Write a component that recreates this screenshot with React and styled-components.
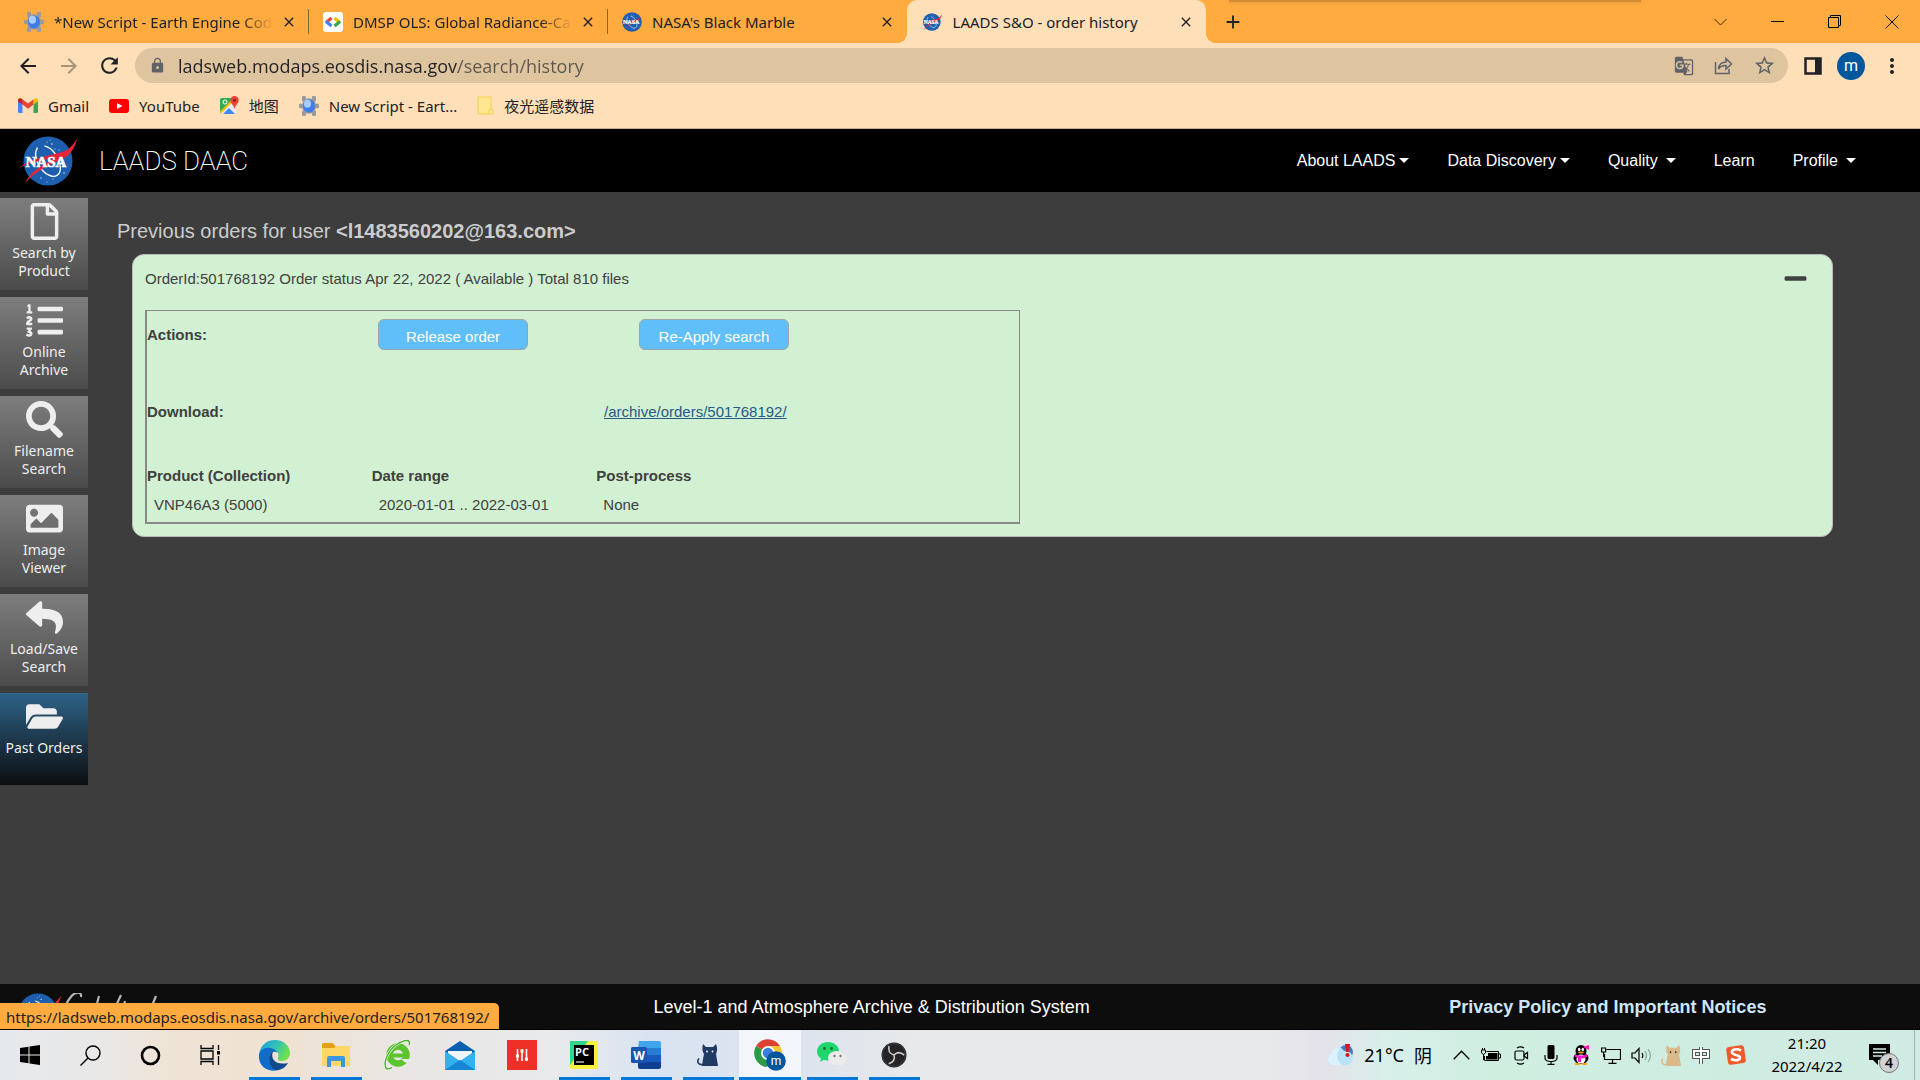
import { useState } from "react";
import styled, { createGlobalStyle } from "styled-components";
import {
  FaRegFile,
  FaListOl,
  FaSearch,
  FaImage,
  FaReply,
  FaFolderOpen,
  FaMinus,
} from "react-icons/fa";
import {
  MdArrowBack,
  MdArrowForward,
  MdRefresh,
  MdLock,
  MdGTranslate,
  MdStarBorder,
  MdMoreVert,
  MdAdd,
  MdClose,
} from "react-icons/md";

const GlobalStyle = createGlobalStyle`
  * {
    box-sizing: border-box;
  }
  body {
    margin: 0;
    background-color: #3d3d3d;
    font-family: "Liberation Sans", Arial, sans-serif;
  }
  button {
    border: none;
    padding: 0;
    background: none;
    font-family: inherit;
    color: inherit;
  }
  svg {
    display: block;
    flex-shrink: 0;
  }
`;

const uiFont = `"Noto Sans", "Noto Sans CJK SC", sans-serif`;

const Screen = styled.div`
  min-height: 100vh;
  display: flex;
  flex-direction: column;
`;

/* browser */

const TabStrip = styled.div`
  position: relative;
  display: flex;
  align-items: center;
  height: 43px;
  padding-left: 10px;
  background-color: #ffab40;
  color: #202124;
  font-family: ${uiFont};
`;
const StripShadow = styled.div`
  position: absolute;
  top: 0;
  left: 64%;
  width: 412px;
  height: 2px;
  background-color: #d18c34;
  box-shadow: 0 0 4px #d18c34;
`;
const Tab = styled.div`
  position: relative;
  display: flex;
  align-items: center;
  flex: 0 1 299px;
  min-width: 0;
  height: 43px;
  padding: 0 12px 0 14px;
  background-color: ${(props) => (props.$active ? "#ffdfb8" : "transparent")};
  border-radius: 10px 10px 0 0;
  &::before,
  &::after {
    content: "";
    display: ${(props) => (props.$active ? "block" : "none")};
    position: absolute;
    bottom: 0;
    width: 10px;
    height: 10px;
  }
  &::before {
    left: -10px;
    background: radial-gradient(circle at 0 0, transparent 10px, #ffdfb8 10px);
  }
  &::after {
    right: -10px;
    background: radial-gradient(circle at 100% 0, transparent 10px, #ffdfb8 10px);
  }
`;
const TabDivider = styled.div`
  position: absolute;
  right: 0;
  width: 1px;
  height: 25px;
  background-color: #8f6428;
`;
const TabTitle = styled.button`
  flex: 1;
  min-width: 0;
  margin-left: 10px;
  font-size: 15px;
  line-height: 22px;
  text-align: left;
  white-space: nowrap;
  overflow: hidden;
  mask-image: ${(props) =>
    props.$fade
      ? "linear-gradient(to right, #000 calc(100% - 32px), transparent)"
      : "none"};
`;
const TabClose = styled.button`
  display: flex;
  justify-content: center;
  width: 16px;
  margin-left: 8px;
`;
const NewTab = styled.button`
  display: flex;
  margin-left: 16px;
`;
const WindowButtons = styled.div`
  display: flex;
  margin-left: auto;
`;
const WindowButton = styled.button`
  display: flex;
  align-items: center;
  justify-content: center;
  width: 57px;
  height: 37px;
  color: #000;
`;

const Toolbar = styled.div`
  display: flex;
  align-items: center;
  height: 45px;
  padding: 0 16px 0 15px;
  background-color: #ffdfb8;
  color: #202124;
`;
const ToolButton = styled.button`
  display: flex;
  justify-content: center;
  width: 25px;
  margin-right: 16px;
  color: ${(props) => (props.$dim ? "#a89478" : "#202124")};
`;
const AddressBar = styled.label`
  display: flex;
  align-items: center;
  flex: 1;
  height: 35px;
  margin: 0 16px 0 -3px;
  padding: 0 12px 0 14px;
  border-radius: 18px;
  background-color: #dfc4a0;
  color: #5f6368;
`;
const AddressInput = styled.input`
  flex: 1;
  min-width: 0;
  margin-left: 12px;
  padding: 0;
  border: none;
  outline: none;
  font-family: "Open Sans", sans-serif;
  font-size: 18px;
  line-height: 26px;
  color: #202124;
  background: linear-gradient(to right, #202124 280px, #5d564d 280px);
  background-clip: text;
  -webkit-text-fill-color: transparent;
`;
const AddressActions = styled.div`
  display: flex;
  align-items: center;
  gap: 20px;
`;
const ToolbarEnd = styled.div`
  display: flex;
  align-items: center;
  gap: 15px;
`;
const Avatar = styled.button`
  width: 28px;
  height: 28px;
  border-radius: 50%;
  background-color: #01579b;
  color: #fff;
  font-family: Roboto, sans-serif;
  font-size: 16px;
  line-height: 26px;
`;
const Bookmarks = styled.nav`
  display: flex;
  align-items: center;
  height: 41px;
  padding: 0 18px 5px;
  gap: 20px;
  background-color: #ffdfb8;
  border-bottom: 1px solid #c9b091;
`;
const Bookmark = styled.a`
  display: flex;
  align-items: center;
  gap: 10px;
  color: #202124;
  font-family: ${uiFont};
  font-size: 15px;
  line-height: 22px;
  text-decoration: none;
`;

/* site */

const Header = styled.header`
  display: flex;
  align-items: center;
  height: 63px;
  padding: 0 64px 0 18px;
  background-color: #000;
  color: #fff;
`;
const Brand = styled.a`
  display: flex;
  align-items: center;
  gap: 21px;
  color: #fff;
  font-family: Roboto, sans-serif;
  font-size: 26px;
  font-weight: 200;
  line-height: 32px;
  text-decoration: none;
`;
const Menu = styled.nav`
  display: flex;
  gap: 38px;
  margin-left: auto;
`;
const MenuItem = styled.a`
  display: flex;
  align-items: center;
  gap: ${(props) => (props.$wide ? "8px" : "4px")};
  color: #fff;
  font-size: 16px;
  line-height: 22px;
  text-decoration: none;
`;
const Caret = styled.span`
  border: 5px solid transparent;
  border-top-color: #fff;
  border-bottom-width: 0;
`;

const Page = styled.div`
  display: flex;
  flex: 1;
  padding-top: 6px;
  background-color: #3d3d3d;
`;
const Sidebar = styled.nav`
  display: flex;
  flex-direction: column;
  gap: 7px;
  width: 88px;
`;
const SidebarItem = styled.a`
  display: flex;
  flex-direction: column;
  align-items: center;
  gap: 4px;
  height: 92px;
  padding-top: 5px;
  background: ${(props) =>
    props.$active
      ? "linear-gradient(#2e6288, #0d0e10)"
      : "linear-gradient(#7e7e7e, #4b4b4b)"};
  color: #eee;
  font-family: "Noto Sans", sans-serif;
  font-size: 14px;
  line-height: 18px;
  text-align: center;
  text-decoration: none;
`;
const Content = styled.main`
  flex: 1;
  padding: 20px 87px 0 29px;
`;
const Title = styled.h1`
  margin: 0;
  color: #ccc;
  font-size: 20px;
  font-weight: normal;
  line-height: 26px;
`;
const Order = styled.section`
  margin: 10px 0 0 15px;
  padding: 11px 12px 12px;
  border: 1px solid #b9bab9;
  border-radius: 12px;
  background-color: #d2f1d2;
  color: #404040;
  font-size: 15px;
  line-height: 24px;
`;
const OrderHead = styled.div`
  display: flex;
  align-items: center;
  justify-content: space-between;
  padding-right: 12px;
`;
const OrderDetails = styled.div`
  max-width: 875px;
  margin-top: 19px;
  border: 1px solid #888;
  border-left-width: 2px;
  border-bottom-width: 2px;
`;
const OrderRow = styled.div`
  display: flex;
  align-items: center;
`;
const ActionsRow = styled(OrderRow)`
  gap: 111px;
  padding-top: 8px;
`;
const DownloadRow = styled(OrderRow)`
  padding: 50px 0 40px;
`;
const Label = styled.strong`
  width: ${(props) => (props.$span ? "457px" : "120px")};
`;
const ActionButton = styled.button`
  width: 150px;
  height: 31px;
  padding-top: 4px;
  border: 1px solid #a0a4a8;
  border-radius: 6px;
  background-color: #60bff8;
  color: #fff;
  font-size: 15px;
`;
const ArchiveLink = styled.a`
  color: #265a88;
`;
const ProductTable = styled.table`
  width: 674px;
  margin-bottom: 5px;
  border-collapse: collapse;
  table-layout: fixed;
  text-align: left;
  th {
    padding: 0 0 5px;
  }
  td {
    padding: 0 0 0 7px;
  }
`;

const Footer = styled.footer`
  position: relative;
  display: flex;
  align-items: center;
  height: 46px;
  padding-right: 8%;
  background-color: #0d0d0d;
  border-bottom: 1px solid #000;
  overflow: hidden;
`;
const FooterLogo = styled.div`
  display: flex;
  align-items: flex-start;
  flex-shrink: 0;
  width: 37%;
  height: 46px;
  padding: 9px 0 0 14px;
`;
const FooterText = styled.span`
  color: #fff;
  font-size: 18px;
  line-height: 24px;
`;
const FooterLink = styled.a`
  margin-left: auto;
  color: #cde6fb;
  font-size: 18px;
  font-weight: bold;
  line-height: 24px;
  text-decoration: none;
`;
const StatusBubble = styled.div`
  position: absolute;
  left: 0;
  bottom: -1px;
  height: 27px;
  padding: 0 10px 0 6px;
  border-top-right-radius: 5px;
  background-color: #ffab40;
  color: #202124;
  font-family: ${uiFont};
  font-size: 15px;
  line-height: 28px;
`;

/* taskbar */

const Taskbar = styled.div`
  display: flex;
  height: 50px;
  background: linear-gradient(
    to right,
    #e6e9ec 0,
    #e9e8e8 5%,
    #efe3d5 9%,
    #efe2d3 15%,
    #e9e6e4 21%,
    #e8eaec 29%,
    #d9e3f1 34%,
    #dde4ee 42%,
    #e8e9ea 48%,
    #e7e9ea 66%,
    #e4e2ea 69%,
    #d8efea 72%,
    #cfeee0 78%,
    #d0ebe3 100%
  );
  color: #000;
  font-family: ${uiFont};
`;
const SystemButton = styled.button`
  display: flex;
  align-items: center;
  justify-content: center;
  width: 60px;
`;
const Apps = styled.div`
  display: flex;
  margin-left: 3px;
`;
const AppButton = styled.button`
  position: relative;
  display: flex;
  align-items: center;
  justify-content: center;
  width: 62px;
  background-color: ${(props) =>
    props.$active ? "rgba(255, 255, 255, 0.65)" : "transparent"};
  &::after {
    content: "";
    display: ${(props) => (props.$open ? "block" : "none")};
    position: absolute;
    bottom: 0;
    left: ${(props) => (props.$active ? "0" : "6px")};
    right: ${(props) => (props.$active ? "0" : "5px")};
    height: 3px;
    background-color: #0078d7;
  }
`;
const Tray = styled.div`
  display: flex;
  align-items: center;
  margin-left: auto;
`;
const Weather = styled.button`
  display: flex;
  align-items: center;
  gap: 10px;
  margin-right: 14px;
  font-size: 18px;
`;
const TrayButton = styled.button`
  display: flex;
  justify-content: center;
  width: ${(props) => (props.$wide ? "40px" : "30px")};
`;
const Clock = styled.button`
  width: 94px;
  padding-left: 8px;
  font-size: 15px;
  line-height: 23px;
`;
const Notices = styled.button`
  position: relative;
  display: flex;
  justify-content: center;
  width: 58px;
`;
const NoticeCount = styled.span`
  position: absolute;
  top: 9px;
  right: 9px;
  width: 20px;
  height: 20px;
  border: 1px solid #777;
  border-radius: 50%;
  background-color: #cfd3d2;
  font-size: 14px;
  font-weight: 600;
  line-height: 18px;
`;
const ShowDesktop = styled.button`
  width: 6px;
  height: 50px;
  margin-left: 6px;
  border-left: 1px solid #9fb3ad;
`;

const NasaLogo = ({ size, tail, plain }) => (
  <svg width={size * (tail ? 1.2 : 1)} height={size} viewBox={tail ? "-5 0 60 50" : "0 0 50 50"}>
    <circle cx="25" cy="25" r="24.5" fill="#1d5fae" />
    <g fill="#dfe9f7">
      <circle cx="14" cy="12" r=".7" />
      <circle cx="24" cy="6" r=".6" />
      <circle cx="29" cy="8" r=".8" />
      <circle cx="32" cy="13" r=".5" />
      <circle cx="27" cy="4" r=".5" />
      <circle cx="10" cy="38" r=".6" />
      <circle cx="18" cy="42" r=".7" />
      <circle cx="30" cy="43" r=".6" />
      <circle cx="36" cy="14" r=".6" />
      <circle cx="41" cy="37" r=".7" />
      <circle cx="24" cy="46" r=".5" />
    </g>
    <ellipse cx="25" cy="25" rx="10" ry="17" fill="none" stroke="#fff" strokeWidth="1.3" transform="rotate(-32 25 25)" strokeDasharray="62 8" />
    <path
      d={tail
        ? "M-4 32 C8 22 30 19 42 15 C48 12 51 7 54 3 C52 12 47 19 40 23 C28 28 14 34 2 47 C8 35 20 28 32 22 C18 24 6 27 -4 32Z"
        : "M3 33 C14 24 30 21 42 17 L46 13 C44 18 42 21 38 23 C28 27 16 33 8 43 C13 34 21 28 31 23 C20 25 10 28 3 33Z"}
      fill="#e4253a"
    />
    {!plain && (
      <text x="23" y="31" textAnchor="middle" fill="#fff" stroke="#fff" strokeWidth=".6" fontFamily="Liberation Serif, serif" fontWeight="bold" fontSize="15">
        NASA
      </text>
    )}
  </svg>
);

const EngineIcon = () => (
  <svg width="20" height="22" viewBox="0 0 20 20" preserveAspectRatio="none">
    <g fill="#9a9a9c">
      <circle cx="10" cy="10" r="7" />
      <rect x="3" y="1" width="4" height="5" rx="1" />
      <rect x="13" y="1" width="4" height="5" rx="1" />
      <rect x="3" y="14" width="4" height="5" rx="1" />
      <rect x="13" y="14" width="4" height="5" rx="1" />
      <rect x="0" y="8" width="4" height="4" rx="1" />
      <rect x="16" y="8" width="4" height="4" rx="1" />
    </g>
    <circle cx="10" cy="10" r="6" fill="#3f7de8" />
    <circle cx="8.5" cy="8" r="3.6" fill="#a9ccfb" />
  </svg>
);

const CodeIcon = () => (
  <svg width="20" height="20" viewBox="0 0 20 20">
    <rect width="20" height="20" rx="3" fill="#fff" />
    <g fill="none" strokeWidth="3.2">
      <path d="M8.500 6 L3 10.500" stroke="#ea4335" />
      <path d="M3 9.500 L8.500 14" stroke="#4285f4" />
      <path d="M11.500 6 L17 10.500" stroke="#fbbc04" />
      <path d="M17 9.500 L11.500 14" stroke="#34a853" />
    </g>
  </svg>
);

const GmailIcon = () => (
  <svg width="20" height="16" viewBox="0 0 20 16">
    <path d="M0 2h4.500v13H1.500A1.500 1.500 0 0 1 0 13.500z" fill="#4285f4" />
    <path d="M15.500 2H20v11.500a1.500 1.500 0 0 1-1.500 1.500h-3z" fill="#34a853" />
    <path d="M4.500 6.500V1.200L10 5.400l5.500-4.200v5.300L10 10.700z" fill="#ea4335" />
    <path d="M0 2.200C0 0 2.500-.4 4.500 1.200v5.300L0 3.500z" fill="#c5221f" />
    <path d="M20 2.200C20 0 17.500-.4 15.500 1.200v5.300L20 3.500z" fill="#fbbc04" />
  </svg>
);

const YoutubeIcon = () => (
  <svg width="20" height="14" viewBox="0 0 20 14">
    <rect width="20" height="14" rx="3" fill="#f00" />
    <path d="M8 4l5.500 3L8 10z" fill="#fff" />
  </svg>
);

const MapsIcon = () => (
  <svg width="19" height="19" viewBox="0 0 19 19">
    <rect y="2" width="16" height="16" rx="2" fill="#34a853" />
    <path d="M0 17L13 4l3 1v12a2 2 0 0 1-1 1H1z" fill="#e8eaed" />
    <path d="M3 18l6-6 6 6z" fill="#4285f4" />
    <path d="M0 17L14 3" stroke="#fbbc04" strokeWidth="2" />
    <path d="M14.500 0a4.200 4.200 0 0 1 4.200 4.200c0 3-3.500 4.500-4.200 9-.7-4.500-4.200-6-4.200-9A4.200 4.200 0 0 1 14.500 0z" fill="#ea4335" />
    <circle cx="14.500" cy="4.200" r="1.500" fill="#8c1d18" />
    <circle cx="5" cy="6" r="2" fill="none" stroke="#fff" />
  </svg>
);

const NoteIcon = () => (
  <svg width="17" height="19" viewBox="0 0 17 19">
    <path d="M1 1h13v12l2 1v4H1z" fill="#ffe68f" stroke="#f3cf56" />
    <path d="M12 18v-4l2-1" fill="none" stroke="#f3cf56" />
  </svg>
);

const ShareIcon = () => (
  <svg width="19" height="19" viewBox="0 0 19 19" fill="none" stroke="#5f6368" strokeWidth="1.500">
    <path d="M1.500 6v11.500H15V13" />
    <path d="M4.500 13C5 8.500 7.500 6 12 6V2.500l5.500 5.500L12 13V9.500C8.500 9.500 6 10.500 4.500 13z" />
  </svg>
);

const PanelIcon = () => (
  <svg width="18" height="18" viewBox="0 0 18 18">
    <path d="M1.500 1.500h15v15h-15z" fill="none" stroke="#202124" strokeWidth="2.500" />
    <path d="M11 1h6v16h-6z" fill="#202124" />
  </svg>
);

const ChevronIcon = () => (
  <svg width="13" height="8" viewBox="0 0 13 8">
    <path d="M.5 1l6 6 6-6" fill="none" stroke="#3a2a10" />
  </svg>
);
const MinimizeIcon = () => (
  <svg width="13" height="2" viewBox="0 0 13 2">
    <path d="M0 .5h13" stroke="#000" />
  </svg>
);
const RestoreIcon = () => (
  <svg width="13" height="13" viewBox="0 0 13 13">
    <path d="M.5 2.500h10v10H.5zM2.500 2.500v-2h10v10h-2" fill="none" stroke="#000" />
  </svg>
);
const CloseIcon = () => (
  <svg width="14" height="14" viewBox="0 0 14 14">
    <path d="M.5 .5l13 13M13.500 .5l-13 13" fill="none" stroke="#000" />
  </svg>
);

const WindowsIcon = () => (
  <svg width="20" height="20" viewBox="0 0 20 20">
    <path d="M0 3l8.500-1.200v7.700H0zM9.500 1.600L20 0v9.500H9.500zM0 10.500h8.500v7.700L0 17zM9.500 10.500H20V20L9.500 18.400z" />
  </svg>
);
const SearchIcon = () => (
  <svg width="21" height="21" viewBox="0 0 21 21" fill="none" stroke="#000" strokeWidth="1.400">
    <circle cx="13" cy="8" r="7" />
    <path d="M8 13l-7.500 7.500" />
  </svg>
);
const CortanaIcon = () => (
  <svg width="21" height="21" viewBox="0 0 21 21">
    <circle cx="10.500" cy="10.500" r="8.500" fill="none" stroke="#000" strokeWidth="2.600" />
  </svg>
);
const TaskViewIcon = () => (
  <svg width="21" height="20" viewBox="0 0 21 20" fill="none" stroke="#000" strokeWidth="1.300">
    <path d="M1 0v3.500h12V0M1 20v-3.500h12V20M1 6h12v8H1zM18.500 0v5M18.500 11v9" />
    <path d="M17 6h3v3.500h-3z" fill="#000" stroke="none" />
  </svg>
);
const EdgeIcon = () => (
  <svg width="31" height="31" viewBox="0 0 31 31">
    <defs>
      <linearGradient id="edgeTop" x1="0" x2="1" y2=".4">
        <stop offset="0" stopColor="#1e9be6" />
        <stop offset=".6" stopColor="#33c3b5" />
        <stop offset="1" stopColor="#6fe04e" />
      </linearGradient>
    </defs>
    <path d="M0 15C1 6 7 0 16 0c9 0 15 6 15 13 0 5-4 8-8 8-3 0-5-1-4-3 2-4-1-8-6-8-6 0-11 2-13 5z" fill="url(#edgeTop)" />
    <path d="M0 15c1-5 6-8 11-7 3 .5 6 2 7.500 4.500C13 10 10 14 10 18c0 6 5 10 11 10l2 .500C13 34-1 29 0 15z" fill="#0f6cc9" />
    <path d="M10 18c0-3 2-6 4-6.500-3 8 3 14 15 11.500-3 5-7 7-12 7-5-2-7-7-7-12z" fill="#124a91" />
  </svg>
);
const ExplorerIcon = () => (
  <svg width="28" height="25" viewBox="0 0 28 25">
    <path d="M0 1.500A1.500 1.500 0 0 1 1.500 0h9l3 3H28v5H0z" fill="#e2a10e" />
    <path d="M0 5h12l2-2h14v20H0z" fill="#ffd766" />
    <path d="M5 24v-9a2 2 0 0 1 2-2h14a2 2 0 0 1 2 2v9h-4v-6H9v6z" fill="#3d96e0" />
  </svg>
);
const GreenBrowserIcon = () => (
  <svg width="28" height="32" viewBox="0 0 28 32" fill="none">
    <circle cx="14" cy="16" r="8.500" stroke="#5cc52e" strokeWidth="6.500" />
    <path d="M7 16.500h14" stroke="#5cc52e" strokeWidth="4" />
    <path d="M17 20h11v3.500h-7z" fill="#e9eaeb" />
    <path d="M25 6C27 0 21 0 12 6 4 12-1 23 2 29c1 1.500 4 1 6-.5" stroke="#fff" strokeWidth="2.600" />
    <path d="M25 6C27 0 21 0 12 6 4 12-1 23 2 29c1 1.500 4 1 6-.5" stroke="#46ad28" strokeWidth="1.400" />
  </svg>
);
const MailIcon = () => (
  <svg width="30" height="29" viewBox="0 0 30 29">
    <path d="M0 10L15 0l15 10v6H0z" fill="#0a5fb0" />
    <path d="M3 10h24v10H3z" fill="#f2f5f8" />
    <path d="M0 10l15 10L30 10v19H0z" fill="#34b1ed" />
    <path d="M0 29l15-10 15 10z" fill="#1586d4" />
  </svg>
);
const MixerIcon = () => (
  <svg width="30" height="30" viewBox="0 0 30 30">
    <path d="M0 0h30v30H0z" fill="#ef3026" />
    <path d="M10.500 9v12M15 9v12M19.500 9v12" stroke="#fff" strokeWidth="1.600" />
    <path d="M9 14.500h3v3H9zM13.500 9.500h3v3h-3zM18 17.500h3v3h-3z" fill="#fff" />
  </svg>
);
const PycharmIcon = () => (
  <svg width="28" height="28" viewBox="0 0 28 28">
    <path d="M0 0h28v28H0z" fill="#f7f23c" />
    <path d="M0 0h18L0 24z" fill="#2fd88a" />
    <path d="M4 4h20v20H4z" />
    <text x="5" y="14.500" fill="#fff" fontSize="11" fontWeight="bold" fontFamily="Open Sans, sans-serif">PC</text>
    <path d="M6 21h8" stroke="#bbb" strokeWidth="1.500" />
  </svg>
);
const WordIcon = () => (
  <svg width="30" height="28" viewBox="0 0 30 28">
    <path d="M8 0h20a2 2 0 0 1 2 2v5H7z" fill="#41a5ee" />
    <path d="M7 7h23v7H7z" fill="#2b7cd3" />
    <path d="M7 14h23v7H7z" fill="#185abd" />
    <path d="M7 21h23v5a2 2 0 0 1-2 2H9a2 2 0 0 1-2-2z" fill="#103f91" />
    <rect y="6" width="16" height="16" rx="1.500" fill="#1854b4" />
    <text x="8" y="18.500" textAnchor="middle" fill="#fff" fontSize="12" fontWeight="bold" fontFamily="Open Sans, sans-serif">W</text>
  </svg>
);
const CatIcon = ({ color, eyes, size }) => (
  <svg width={size} height={size} viewBox="0 0 22 22">
    <path d="M6 0l3 3h7l3-3c1.500 4 1.500 7 0 10l2 12H5l1-7 1-5C5 7 5 4 6 0z" fill={color} />
    <path d="M7 20.500c-6 1-7.500-3-5-6" fill="none" stroke={color} strokeWidth="1.600" />
    <circle cx="10" cy="7.500" r=".9" fill={eyes} />
    <circle cx="15.500" cy="7.500" r=".9" fill={eyes} />
  </svg>
);
const ChromeIcon = () => (
  <svg width="32" height="32" viewBox="0 0 32 32">
    <path d="M14 14L2 7A14 14 0 0 1 26 7z" fill="#dd4132" />
    <path d="M14 14L2 7a14 14 0 0 0 11 21l7-11z" fill="#2c9a47" />
    <path d="M14 7h12a14 14 0 0 1-13 21l7-11z" fill="#fcc62f" />
    <circle cx="14" cy="14" r="7" fill="#fff" />
    <circle cx="14" cy="14" r="5.300" fill="#3f7de0" />
    <circle cx="22" cy="22" r="9.800" fill="#01579b" />
    <text x="22" y="26" textAnchor="middle" fill="#fff" fontSize="12" fontFamily="Roboto, sans-serif">m</text>
  </svg>
);
const WechatIcon = () => (
  <svg width="30" height="26" viewBox="0 0 30 26">
    <path d="M11 0c6 0 11 4 11 9s-5 9.500-11 9.500c-1.500 0-3-.3-4-.7L3 20l1-3.500C1.500 15 0 12 0 9.500 0 4 5 0 11 0z" fill="#1ed66c" />
    <circle cx="7.500" cy="6.500" r="1.400" fill="#156b3b" />
    <circle cx="14.500" cy="6.500" r="1.400" fill="#156b3b" />
    <path d="M20 9c5 0 9 3 9 7 0 2.500-1.300 4.500-3.500 6l.5 3-3-2c-6 1-12-2-12-7 0-4 4-7 9-7z" fill="#ebebeb" />
    <circle cx="17.500" cy="14" r="1.200" fill="#777" />
    <circle cx="23.500" cy="14" r="1.200" fill="#777" />
  </svg>
);
const ObsIcon = () => (
  <svg width="26" height="26" viewBox="0 0 26 26">
    <circle cx="13" cy="13" r="12.500" fill="#252326" />
    <g fill="none" stroke="#d2d0d3" strokeWidth="1.500">
      <path d="M8 4c-1 5 1 8 5 9" />
      <path d="M8 4c-1 5 1 8 5 9" transform="rotate(120 13 13)" />
      <path d="M8 4c-1 5 1 8 5 9" transform="rotate(240 13 13)" />
    </g>
    <circle cx="13" cy="13" r="11.500" fill="none" stroke="#3c3a3e" />
  </svg>
);

const CloudIcon = () => (
  <svg width="28" height="22" viewBox="0 0 28 22">
    <circle cx="20" cy="8" r="7" fill="#3f7fc9" />
    <path d="M6 21a6 6 0 0 1-1-11 7 7 0 0 1 13-3 7 7 0 0 1 3 14z" fill="#b9e1f8" />
    <path d="M6 21a6 6 0 0 1-1-11 7 7 0 0 1 9-6c-3 6-5 11 2 17z" fill="#dcf1fc" />
    <path d="M19 0h5l-1 8h-3z" fill="#d9142b" />
    <circle cx="21.500" cy="11" r="2" fill="#d9142b" />
  </svg>
);
const UpIcon = () => (
  <svg width="17" height="10" viewBox="0 0 17 10">
    <path d="M.7 9.300l7.800-8 7.800 8" fill="none" stroke="#000" strokeWidth="1.300" />
  </svg>
);
const BatteryIcon = () => (
  <svg width="20" height="14" viewBox="0 0 20 14">
    <path d="M5.500 3.500h12v9H3.500V8M18 6h1.500v4H18" fill="none" stroke="#000" />
    <path d="M7 5h9.500v6.500H5V8h2z" />
    <path d="M.5 2h4v3l-2 1.500L.5 5zM1.500 0v2M3.500 0v2M2.500 6v6" stroke="#000" fill="none" />
  </svg>
);
const CameraIcon = () => (
  <svg width="15" height="19" viewBox="0 0 15 19" fill="none" stroke="#000" strokeWidth="1.200">
    <rect x="1" y="5" width="9" height="9" rx="1.500" />
    <path d="M10 9l3.500-2.500v6L10 10zM3 2c2-1.300 5-1.300 7 0M3 17c2 1.300 5 1.300 7 0" />
  </svg>
);
const MicIcon = () => (
  <svg width="14" height="20" viewBox="0 0 14 20">
    <rect x="3.500" width="7" height="14" rx="1.500" />
    <path d="M1 10v3c0 2 2 3.500 6 3.500s6-1.500 6-3.500v-3M7 16v3M3.500 19.300h7" fill="none" stroke="#000" strokeWidth="1.200" />
  </svg>
);
const PenguinIcon = () => (
  <svg width="17" height="20" viewBox="0 0 17 20">
    <ellipse cx="8" cy="6" rx="5.500" ry="6" />
    <ellipse cx="8" cy="13" rx="7.500" ry="6" />
    <ellipse cx="8" cy="14" rx="4.500" ry="4.500" fill="#fff" />
    <ellipse cx="6.200" cy="4.500" rx="1.300" ry="1.800" fill="#fff" />
    <ellipse cx="9.800" cy="4.500" rx="1.300" ry="1.800" fill="#fff" />
    <ellipse cx="8" cy="7.500" rx="3" ry="1" fill="#f5a300" />
    <path d="M2 9c4 2 8 2 12 0v3c-2 1-4 1.500-6 1.500V17H5v-4L2 12zM10 2l6-2v5z" fill="#f51bbd" />
    <ellipse cx="4.500" cy="19" rx="3" ry="1" fill="#f5a300" />
    <ellipse cx="11.500" cy="19" rx="3" ry="1" fill="#f5a300" />
  </svg>
);
const NetworkIcon = () => (
  <svg width="20" height="17" viewBox="0 0 20 17" fill="none" stroke="#000" strokeWidth="1.200">
    <path d="M5.500 2.500h14v10H3.500V7M11.500 12.500v3.500M7.500 16.300h8M.6 1h4v4h-4zM2.600 5v5" />
  </svg>
);
const VolumeIcon = () => (
  <svg width="21" height="17" viewBox="0 0 21 17" fill="none" stroke="#000" strokeWidth="1.200">
    <path d="M1 6h3l4-4.500v14L4 11H1zM11 6c1 1.500 1 3.500 0 5" />
    <path d="M14 4c2 3 2 6 0 9M17 2c3 4 3 9 0 13" stroke="#8da39d" />
  </svg>
);
const ImeIcon = () => (
  <svg width="18" height="19" viewBox="0 0 18 19" fill="none">
    <path d="M2 5h14v6H2zM9 1v17" stroke="#555" strokeWidth="4" />
    <path d="M2 5h14v6H2zM9 1v17" stroke="#fff" strokeWidth="2" />
  </svg>
);
const SogouIcon = () => (
  <svg width="20" height="20" viewBox="0 0 20 20">
    <rect x="1" y="1" width="18" height="18" rx="3" fill="#ee5a29" transform="rotate(-8 10 10)" />
    <path d="M15 5.500C11 3.500 5.500 4 6 7.500c.5 3 8 2 8 5 0 3-5 3.500-9 1.500" fill="none" stroke="#fff" strokeWidth="2.600" />
  </svg>
);
const NoticeIcon = () => (
  <svg width="21" height="22" viewBox="0 0 21 22">
    <path d="M0 0h21v16H9v5l-5-5H0z" />
    <path d="M4 5h13M4 8.500h13M4 12h9" stroke="#d0ebe3" strokeWidth="1.300" />
  </svg>
);

const tabs = [
  { title: "*New Script - Earth Engine Code Editor", icon: <EngineIcon />, fade: true, divider: true },
  { title: "DMSP OLS: Global Radiance-Calibrated", icon: <CodeIcon />, fade: true, divider: true },
  { title: "NASA's Black Marble", icon: <NasaLogo size={20} /> },
  { title: "LAADS S&O - order history", icon: <NasaLogo size={18} tail />, active: true },
];

const bookmarks = [
  { name: "Gmail", icon: <GmailIcon /> },
  { name: "YouTube", icon: <YoutubeIcon /> },
  { name: "地图", icon: <MapsIcon /> },
  { name: "New Script - Eart...", icon: <EngineIcon /> },
  { name: "夜光遥感数据", icon: <NoteIcon /> },
];

const menu = [
  { name: "About LAADS", caret: true },
  { name: "Data Discovery", caret: true },
  { name: "Quality", caret: true, wide: true },
  { name: "Learn" },
  { name: "Profile", caret: true, wide: true },
];

const sidebar = [
  { lines: ["Search by", "Product"], Icon: FaRegFile },
  { lines: ["Online", "Archive"], Icon: FaListOl },
  { lines: ["Filename", "Search"], Icon: FaSearch },
  { lines: ["Image", "Viewer"], Icon: FaImage },
  { lines: ["Load/Save", "Search"], Icon: FaReply },
  { lines: ["Past Orders"], Icon: FaFolderOpen, active: true },
];

const system = [
  { name: "Start", icon: <WindowsIcon /> },
  { name: "Search", icon: <SearchIcon /> },
  { name: "Cortana", icon: <CortanaIcon /> },
  { name: "Task view", icon: <TaskViewIcon /> },
];

const apps = [
  { name: "Edge", icon: <EdgeIcon />, open: true },
  { name: "Explorer", icon: <ExplorerIcon />, open: true },
  { name: "Browser", icon: <GreenBrowserIcon /> },
  { name: "Mail", icon: <MailIcon /> },
  { name: "Mixer", icon: <MixerIcon /> },
  { name: "PyCharm", icon: <PycharmIcon />, open: true },
  { name: "Word", icon: <WordIcon />, open: true },
  { name: "Clash", icon: <CatIcon color="#1f3a63" eyes="#fff" size={22} />, open: true },
  { name: "Chrome", icon: <ChromeIcon />, open: true, active: true },
  { name: "WeChat", icon: <WechatIcon />, open: true },
  { name: "OBS", icon: <ObsIcon />, open: true },
];

const tray = [
  { name: "Show hidden icons", icon: <UpIcon /> },
  { name: "Battery", icon: <BatteryIcon /> },
  { name: "Camera", icon: <CameraIcon /> },
  { name: "Microphone", icon: <MicIcon /> },
  { name: "QQ", icon: <PenguinIcon /> },
  { name: "Network", icon: <NetworkIcon /> },
  { name: "Volume", icon: <VolumeIcon /> },
  { name: "Cat", icon: <CatIcon color="#dcb98a" eyes="#333" size={21} /> },
  { name: "Input mode", icon: <ImeIcon /> },
  { name: "Sogou", icon: <SogouIcon />, wide: true },
];

const Browser = () => {
  const [url, setUrl] = useState("ladsweb.modaps.eosdis.nasa.gov/search/history");

  return (
    <>
      <TabStrip>
        <StripShadow />
        {tabs.map((tab) => (
          <Tab key={tab.title} $active={tab.active}>
            {tab.icon}
            <TabTitle $fade={tab.fade}>{tab.title}</TabTitle>
            <TabClose aria-label="Close tab">
              <MdClose size={16} />
            </TabClose>
            {tab.divider && <TabDivider />}
          </Tab>
        ))}
        <NewTab aria-label="New tab">
          <MdAdd size={22} />
        </NewTab>
        <WindowButtons>
          <WindowButton aria-label="Tabs"><ChevronIcon /></WindowButton>
          <WindowButton aria-label="Minimize"><MinimizeIcon /></WindowButton>
          <WindowButton aria-label="Restore"><RestoreIcon /></WindowButton>
          <WindowButton aria-label="Close"><CloseIcon /></WindowButton>
        </WindowButtons>
      </TabStrip>
      <Toolbar>
        <ToolButton aria-label="Back"><MdArrowBack size={24} /></ToolButton>
        <ToolButton aria-label="Forward" $dim><MdArrowForward size={24} /></ToolButton>
        <ToolButton aria-label="Reload"><MdRefresh size={25} /></ToolButton>
        <AddressBar>
          <MdLock size={17} />
          <AddressInput
            aria-label="Address"
            value={url}
            spellCheck={false}
            onChange={(e) => setUrl(e.target.value)}
          />
          <AddressActions>
            <MdGTranslate size={20} />
            <ShareIcon />
            <MdStarBorder size={23} />
          </AddressActions>
        </AddressBar>
        <ToolbarEnd>
          <PanelIcon />
          <Avatar>m</Avatar>
          <MdMoreVert size={24} />
        </ToolbarEnd>
      </Toolbar>
      <Bookmarks>
        {bookmarks.map((item) => (
          <Bookmark key={item.name} href="#">
            {item.icon}
            {item.name}
          </Bookmark>
        ))}
      </Bookmarks>
    </>
  );
};

const OrderPanel = () => (
  <Order>
    <OrderHead>
      <span>
        OrderId:501768192 Order status Apr 22, 2022 ( Available ) Total 810 files
      </span>
      <button aria-label="Collapse">
        <FaMinus size={25} />
      </button>
    </OrderHead>
    <OrderDetails>
      <ActionsRow>
        <Label>Actions:</Label>
        <ActionButton>Release order</ActionButton>
        <ActionButton>Re-Apply search</ActionButton>
      </ActionsRow>
      <DownloadRow>
        <Label $span>Download:</Label>
        <ArchiveLink href="#">/archive/orders/501768192/</ArchiveLink>
      </DownloadRow>
      <ProductTable>
        <thead>
          <tr>
            <th>Product (Collection)</th>
            <th>Date range</th>
            <th>Post-process</th>
          </tr>
        </thead>
        <tbody>
          <tr>
            <td>VNP46A3 (5000)</td>
            <td>2020-01-01 .. 2022-03-01</td>
            <td>None</td>
          </tr>
        </tbody>
      </ProductTable>
    </OrderDetails>
  </Order>
);

const App = () => {
  return (
    <Screen>
      <GlobalStyle />
      <Browser />
      <Header>
        <Brand href="#">
          <NasaLogo size={50} tail />
          LAADS DAAC
        </Brand>
        <Menu>
          {menu.map((item) => (
            <MenuItem key={item.name} href="#" $wide={item.wide}>
              {item.name}
              {item.caret && <Caret />}
            </MenuItem>
          ))}
        </Menu>
      </Header>
      <Page>
        <Sidebar>
          {sidebar.map(({ lines, Icon, active }) => (
            <SidebarItem key={lines.join(" ")} href="#" $active={active}>
              <Icon size={37} />
              <span>
                {lines[0]}
                <br />
                {lines[1]}
              </span>
            </SidebarItem>
          ))}
        </Sidebar>
        <Content>
          <Title>
            Previous orders for user <b>&lt;l1483560202@163.com&gt;</b>
          </Title>
          <OrderPanel />
        </Content>
      </Page>
      <Footer>
        <FooterLogo>
          <NasaLogo size={40} tail plain />
          <svg width="110" height="40" viewBox="0 0 110 40" fill="none" stroke="#b5b5b5" strokeWidth="2.200">
            <path d="M19 4C20-2 13-2 8 5 3 11-1 26 3 34c4 3 10 0 15-6" />
            <path d="M37 3L30 30M59 2L46 30M94 3L82 32M63 8l-4 18" />
          </svg>
        </FooterLogo>
        <FooterText>Level-1 and Atmosphere Archive &amp; Distribution System</FooterText>
        <FooterLink href="#">Privacy Policy and Important Notices</FooterLink>
        <StatusBubble>https://ladsweb.modaps.eosdis.nasa.gov/archive/orders/501768192/</StatusBubble>
      </Footer>
      <Taskbar>
        {system.map((item) => (
          <SystemButton key={item.name} aria-label={item.name}>
            {item.icon}
          </SystemButton>
        ))}
        <Apps>
          {apps.map((item) => (
            <AppButton key={item.name} aria-label={item.name} $open={item.open} $active={item.active}>
              {item.icon}
            </AppButton>
          ))}
        </Apps>
        <Tray>
          <Weather>
            <CloudIcon />
            <span>21°C</span>
            <span>阴</span>
          </Weather>
          {tray.map((item) => (
            <TrayButton key={item.name} aria-label={item.name} $wide={item.wide}>
              {item.icon}
            </TrayButton>
          ))}
          <Clock>
            21:20
            <br />
            2022/4/22
          </Clock>
          <Notices aria-label="Notifications">
            <NoticeIcon />
            <NoticeCount>4</NoticeCount>
          </Notices>
          <ShowDesktop aria-label="Show desktop" />
        </Tray>
      </Taskbar>
    </Screen>
  );
};
export default App;
